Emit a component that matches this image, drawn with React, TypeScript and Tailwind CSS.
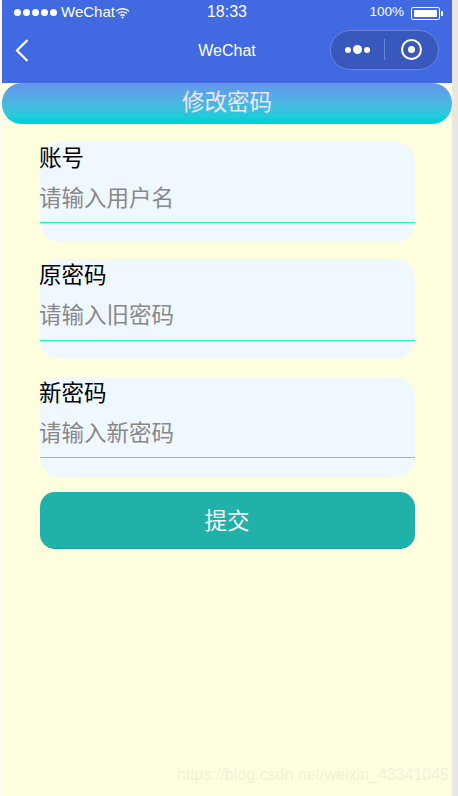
import React from 'react';

const cjk = '"Liberation Sans", "Noto Sans CJK SC", sans-serif';

const fields = [
  { label: '账号', placeholder: '请输入用户名', inputH: 'h-[47px]', gap: '' },
  { label: '原密码', placeholder: '请输入旧密码', inputH: 'h-[48px]', gap: 'mt-[17px]' },
  { label: '新密码', placeholder: '请输入新密码', inputH: 'h-[47px]', gap: 'mt-[18px]' },
];

function Field({ label, placeholder, inputH, gap }: { label: string; placeholder: string; inputH: string; gap: string }) {
  return (
    <div className={`h-[100px] rounded-[20px] bg-[#f0f8ff] ${gap}`}>
      <div className="-ml-px text-[22.5px] leading-[34px] text-black">{label}</div>
      <div className={`${inputH} border-b border-[#1dfba4] text-[22.5px] leading-[46px] text-[#888888]`}>
        <span className="-ml-px block">{placeholder}</span>
      </div>
    </div>
  );
}

export default function App() {
  return (
    <div className="relative h-[796px] w-[458px] overflow-hidden bg-[#e9e7e4] pr-[6px]" style={{ fontFamily: cjk }}>
      <div className="h-full border-l-2 border-[#fbfbf3]">
        <div className="relative h-full bg-[#ffffe0]">
          {/* Status + nav */}
          <header className="h-[83px] bg-[#4169e1] text-white">
            <div className="grid h-[20px] grid-cols-[1fr_auto_1fr] items-center pl-[12px] pr-[9px] text-[15px]">
              <div className="flex items-center">
                <div className="flex gap-[2px]">
                  {[0, 1, 2, 3, 4].map((i) => (
                    <span key={i} className="h-[7px] w-[7px] rounded-full bg-white" />
                  ))}
                </div>
                <span className="ml-[4px]">WeChat</span>
                <svg width="15" height="12" viewBox="0 0 15 12" fill="none" stroke="white" strokeWidth="1.4" className="mt-[1px]">
                  <path d="M1 4.2C4.8 1 10.2 1 14 4.2" />
                  <path d="M3.2 6.4C5.6 4.4 9.4 4.4 11.8 6.4" />
                  <path d="M5.4 8.6C6.6 7.7 8.4 7.7 9.6 8.6" />
                  <circle cx="7.5" cy="10.5" r="1" fill="white" stroke="none" />
                </svg>
              </div>
              <span className="mr-[-2px] ml-[-5px] text-[16px]">18:33</span>
              <div className="flex items-center justify-end gap-[7px]">
                <span className="text-[13.5px]">100%</span>
                <div className="mt-[2px] flex items-center">
                  <div className="flex h-[13px] w-[29px] items-center rounded-[2px] border border-white p-[2px]">
                    <div className="h-full w-full rounded-[1px] bg-white" />
                  </div>
                  <div className="ml-[1px] h-[5px] w-[2px] bg-white" />
                </div>
              </div>
            </div>
            <div className="grid h-[63px] grid-cols-[1fr_auto_1fr] items-center pl-[13px] pr-[13px]">
              <svg width="14" height="24" viewBox="0 0 14 24" fill="none" stroke="white" strokeWidth="2.2" className="mt-[-4px]">
                <path d="M12.5 2 2 12.5 12.5 23" />
              </svg>
              <span className="mt-[-1px] text-[16px]">WeChat</span>
              <div className="mt-[-4px] flex h-[40px] w-[109px] items-center justify-self-end rounded-full border border-[#6a85d8] bg-[#3858bd]">
                <div className="flex w-[53px] items-center justify-center gap-[2px]">
                  <span className="h-[6px] w-[6px] rounded-full bg-white" />
                  <span className="h-[9px] w-[9px] rounded-full bg-white" />
                  <span className="h-[6px] w-[6px] rounded-full bg-white" />
                </div>
                <div className="h-[21px] w-px bg-[#6a85d8]" />
                <div className="flex flex-1 items-center justify-center">
                  <div className="flex h-[21px] w-[21px] items-center justify-center rounded-full border-[2.5px] border-white">
                    <span className="h-[7px] w-[7px] rounded-full bg-white" />
                  </div>
                </div>
              </div>
            </div>
          </header>

          {/* Title */}
          <div className="flex h-[41px] items-center justify-center rounded-[20px] bg-gradient-to-b from-[#6495ed] to-[#00d0d8] to-90% pb-[2px] text-[22.5px] text-[#f0e6f0]">
            修改密码
          </div>

          {/* Form */}
          <div className="ml-[38px] mr-[37px] mt-[18px] flex flex-col">
            {fields.map((f) => (
              <Field key={f.label} {...f} />
            ))}
            <button className="mt-[15px] flex h-[57px] items-center justify-center rounded-[15px] border-b border-[#1c9d96] bg-[#20b2aa] pt-[4px] text-[22.5px] text-[#f5f5f5]">
              <span className="-ml-px">提交</span>
            </button>
          </div>

          {/* Watermark */}
          <div className="absolute bottom-[9px] right-[3px] text-[16px] text-[#f1f1d6]">https://blog.csdn.net/weixin_43341045</div>
        </div>
      </div>
    </div>
  );
}
